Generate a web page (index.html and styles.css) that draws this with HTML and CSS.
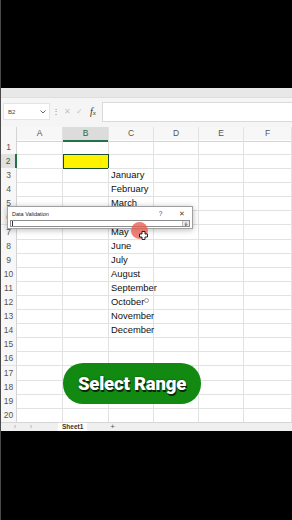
FILE: index.html
```html
<!DOCTYPE html>
<html lang="en">
<head>
    <meta charset="UTF-8" />
    <title>Data Validation - Select Range</title>
    <link rel="stylesheet" href="styles.css">
</head>
<body>
    <div class="frame">
        <div class="excel">
            <div class="ribbon"></div>

            <div class="formula">
                <div class="namebox">
                    <span>B2</span>
                    <svg class="chev" width="6" height="4" viewBox="0 0 6 4"><path d="M0.5 0.5 L3 3 L5.5 0.5" fill="none" stroke="#555" stroke-width="0.9"/></svg>
                </div>
                <span class="dots">⋮</span>
                <span class="fx-btn muted">✕</span>
                <span class="fx-btn muted">✓</span>
                <span class="fx-btn fx"><i>f</i><i class="x">x</i></span>
                <div class="fbox"></div>
            </div>

            <div class="row head">
                <span class="rh corner"></span>
                <span>A</span><span class="sel">B</span><span>C</span><span>D</span><span>E</span><span>F</span>
            </div>

            <div class="grid">
                <div class="row"><span class="rh">1</span><span></span><span></span><span></span><span></span><span></span><span></span></div>
                <div class="row"><span class="rh active">2</span><span></span><span class="cell-yellow"></span><span></span><span></span><span></span><span></span></div>
                <div class="row"><span class="rh">3</span><span></span><span></span><span class="txt">January</span><span></span><span></span><span></span></div>
                <div class="row"><span class="rh">4</span><span></span><span></span><span class="txt">February</span><span></span><span></span><span></span></div>
                <div class="row"><span class="rh">5</span><span></span><span></span><span class="txt">March</span><span></span><span></span><span></span></div>
                <div class="row"><span class="rh">6</span><span></span><span></span><span class="txt">April</span><span></span><span></span><span></span></div>
                <div class="row"><span class="rh">7</span><span></span><span></span><span class="txt">May</span><span></span><span></span><span></span></div>
                <div class="row"><span class="rh">8</span><span></span><span></span><span class="txt">June</span><span></span><span></span><span></span></div>
                <div class="row"><span class="rh">9</span><span></span><span></span><span class="txt">July</span><span></span><span></span><span></span></div>
                <div class="row"><span class="rh">10</span><span></span><span></span><span class="txt">August</span><span></span><span></span><span></span></div>
                <div class="row"><span class="rh">11</span><span></span><span></span><span class="txt">September</span><span></span><span></span><span></span></div>
                <div class="row"><span class="rh">12</span><span></span><span></span><span class="txt">October</span><span></span><span></span><span></span></div>
                <div class="row"><span class="rh">13</span><span></span><span></span><span class="txt">November</span><span></span><span></span><span></span></div>
                <div class="row"><span class="rh">14</span><span></span><span></span><span class="txt">December</span><span></span><span></span><span></span></div>
                <div class="row"><span class="rh">15</span><span></span><span></span><span></span><span></span><span></span><span></span></div>
                <div class="row"><span class="rh">16</span><span></span><span></span><span></span><span></span><span></span><span></span></div>
                <div class="row"><span class="rh">17</span><span></span><span></span><span></span><span></span><span></span><span></span></div>
                <div class="row"><span class="rh">18</span><span></span><span></span><span></span><span></span><span></span><span></span></div>
                <div class="row"><span class="rh">19</span><span></span><span></span><span></span><span></span><span></span><span></span></div>
                <div class="row"><span class="rh">20</span><span></span><span></span><span></span><span></span><span></span><span></span></div>
            </div>

            <div class="tabs">
                <span class="nav">‹</span>
                <span class="nav">›</span>
                <span class="tab">Sheet1</span>
                <span class="plus">+</span>
            </div>

            <!-- floating dialog -->
            <div class="dialog">
                <div class="dlg-title">
                    <span>Data Validation</span>
                    <span class="dlg-icons"><span>?</span><span class="close">✕</span></span>
                </div>
                <div class="dlg-input">
                    <span class="caret"></span>
                    <span class="collapse"><svg width="5" height="5" viewBox="0 0 5 5"><path d="M2.5 0.5 V4.5 M0.8 2.8 L2.5 4.5 L4.2 2.8" fill="none" stroke="#333" stroke-width="0.8"/></svg></span>
                </div>
            </div>

            <!-- touch indicator + cursor -->
            <div class="touch"></div>
            <svg class="cursor" width="9" height="9" viewBox="0 0 9 9">
                <path d="M3 0.5 H6 V3 H8.5 V6 H6 V8.5 H3 V6 H0.5 V3 H3 Z" fill="#fff" stroke="#111" stroke-width="0.9"/>
            </svg>
            <div class="ring"></div>

            <div class="cta">Select Range</div>
        </div>
    </div>
</body>
</html>
```

FILE: styles.css
```css
html, body {
    margin: 0; padding: 0;
    background: #000;
}

body {
    width: 292px; height: 520px;
    overflow: hidden;
    font-family: 'Liberation Sans', Arial, sans-serif;
    color: #222;
}

.frame {
    height: 520px;
    border-left: 1px solid #4a4a4a;
    box-sizing: border-box;
    padding-top: 88px;
}

.excel {
    position: relative;
    height: 343px;
    background: #fff;
    overflow: hidden;
    display: flex; flex-direction: column;
}

.ribbon {
    flex: none;
    height: 10px;
    background: #e8e8e8;
    border-bottom: 1px solid #dedede;
    box-sizing: border-box;
}

/* formula bar */
.formula {
    flex: none;
    height: 29px;
    background: #f5f5f5;
    display: flex; align-items: flex-start;
    padding: 5px 0 0 2px;
    box-sizing: border-box;
}

.namebox {
    width: 47px; height: 17px;
    background: #fff;
    border: 1px solid #e4e4e4;
    box-sizing: border-box;
    display: flex; align-items: center; justify-content: space-between;
    padding: 0 3px 0 4px;
    font-size: 6px;
    color: #444;
}

.chev { margin-top: 1px; }

.dots {
    width: 10px;
    margin-left: 1px;
    text-align: center;
    font-size: 8px;
    line-height: 17px;
    color: #888;
}

.fx-btn {
    width: 12px;
    text-align: center;
    font-size: 8px;
    line-height: 17px;
}

.muted { color: #c4c4c4; }

.fx {
    font-family: 'Liberation Serif', serif;
    font-size: 10px;
    color: #333;
    margin-left: 2px;
}

.fx .x { font-size: 7px; }

.fbox {
    flex: 1;
    height: 20px;
    margin-left: 3px;
    margin-top: -1px;
    background: #fff;
    border: 1px solid #dadada;
    border-right: none;
    box-sizing: border-box;
}

/* grid */
.row {
    display: grid;
    grid-template-columns: 16px 46px 46px 45px 45px 45px 1fr;
    height: 14.1px;
}

.row > span {
    border-right: 1px solid #e2e2e2;
    border-bottom: 1px solid #e2e2e2;
    box-sizing: border-box;
    min-width: 0;
}

.head {
    flex: none;
    height: 13px;
    background: #f7f7f7;
}

.head > span {
    font-size: 8.5px;
    line-height: 13px;
    text-align: center;
    color: #555;
    border-bottom-color: #d4d4d4;
}

.head > .sel {
    background: #dcdcdc;
    color: #1e6b3c;
    border-bottom: 2px solid #217346;
}

.corner { background: #f7f7f7; }

.grid {
    flex: none;
}

.rh {
    background: #f7f7f7;
    font-size: 8.5px;
    line-height: 14px;
    text-align: center;
    color: #555;
}

.row > .rh { border-right-color: #d4d4d4; }

.row > .rh.active {
    background: #e2e2e2;
    border-right: 2px solid #217346;
    color: #1e6b3c;
}

.row > .cell-yellow {
    background: #fff200;
    border: 1.5px solid #1d4f2e;
}

.txt {
    font-size: 9.4px;
    line-height: 14px;
    padding-left: 2px;
    white-space: nowrap;
    overflow: visible;
    color: #111;
    position: relative;
    z-index: 1;
}

/* sheet tabs */
.tabs {
    flex: 1;
    background: #efefef;
    border-top: 1px solid #d6d6d6;
    display: flex; align-items: flex-start;
    font-size: 6.5px;
    color: #333;
}

.nav {
    width: 16px;
    text-align: center;
    color: #9a9a9a;
    line-height: 8px;
}

.nav:first-child { margin-left: 6px; }

.tab {
    margin-left: 19px;
    padding: 0 4px;
    background: #fff;
    font-weight: bold;
    line-height: 8px;
}

.plus {
    margin-left: 23px;
    font-size: 8px;
    line-height: 8px;
    color: #555;
}

/* dialog */
.dialog {
    position: absolute;
    left: 6px; top: 118px;
    width: 186px; height: 23px;
    background: #fff;
    border: 1px solid #a0a0a0;
    box-sizing: border-box;
    box-shadow: 0 1px 6px rgba(0,0,0,0.28);
    z-index: 3;
}

.dlg-title {
    height: 13px;
    display: flex; align-items: center; justify-content: space-between;
    padding-left: 4px;
    font-size: 5.5px;
    color: #222;
}

.dlg-icons {
    display: flex;
    font-size: 6.5px;
    color: #444;
}

.dlg-icons span { width: 21px; text-align: center; }

.dlg-input {
    margin: 0 2px;
    height: 7px;
    border: 1px solid #8c8c8c;
    box-sizing: border-box;
    display: flex; justify-content: space-between; align-items: stretch;
}

.caret {
    width: 1px;
    margin-left: 1px;
    background: #333;
}

.collapse {
    width: 6px;
    background: #e8e8e8;
    border-left: 1px solid #bdbdbd;
    display: flex; align-items: center; justify-content: center;
}

.collapse svg { width: 4px; height: 4px; }

.touch {
    position: absolute;
    left: 130px; top: 134px;
    width: 17px; height: 17px;
    border-radius: 50%;
    background: rgba(232, 92, 80, 0.78);
    z-index: 4;
}

.cursor {
    position: absolute;
    left: 138px; top: 143px;
    z-index: 5;
}

.ring {
    position: absolute;
    left: 143px; top: 210px;
    width: 3px; height: 3px;
    border: 1px solid #9a9a9a;
    border-radius: 50%;
    z-index: 4;
}

/* overlay caption */
.cta {
    position: absolute;
    left: 62px; top: 275px;
    width: 138px; height: 41px;
    border-radius: 20px;
    background: #128a12;
    display: flex; align-items: center; justify-content: center;
    font-family: Roboto, 'Liberation Sans', sans-serif;
    font-weight: 900;
    font-size: 18.5px;
    letter-spacing: -0.2px;
    color: #fff;
    text-shadow: 1px 2px 0 #0a2a0a, 0 0 2px rgba(0,0,0,0.6);
    z-index: 6;
}
```
